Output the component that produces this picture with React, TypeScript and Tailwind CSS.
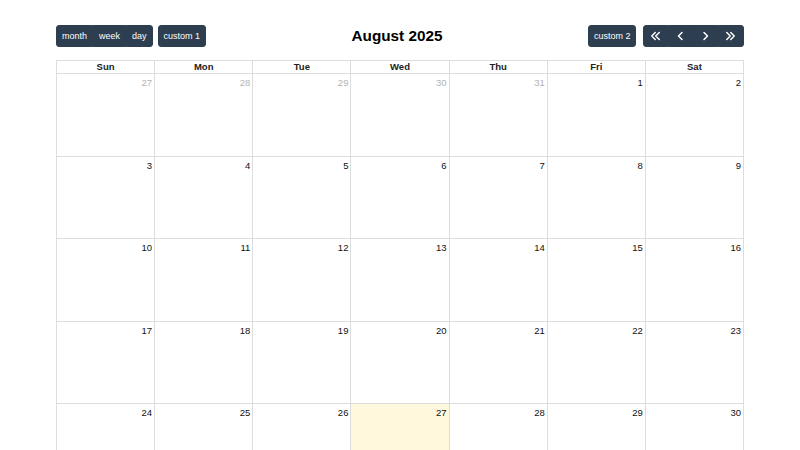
import React from "react";

const Chev = ({ dir, double }: { dir: "l" | "r"; double?: boolean }) => {
  const single = dir === "l" ? "M6 1.5 L2.5 5 L6 8.5" : "M3 1.5 L6.5 5 L3 8.5";
  const dbl =
    dir === "l"
      ? "M5 1.5 L1.5 5 L5 8.5 M9 1.5 L5.5 5 L9 8.5"
      : "M1.5 1.5 L5 5 L1.5 8.5 M5.5 1.5 L9 5 L5.5 8.5";
  return (
    <svg width={double ? 11 : 9} height="10" viewBox={double ? "0 0 10.5 10" : "0 0 9 10"} fill="none" stroke="white" strokeWidth="1.5" strokeLinecap="round" strokeLinejoin="round">
      <path d={double ? dbl : single} />
    </svg>
  );
};

export default function App() {
  const days = ["Sun", "Mon", "Tue", "Wed", "Thu", "Fri", "Sat"];
  const cells: { n: number; other: boolean; today?: boolean }[] = [];
  [27, 28, 29, 30, 31].forEach((n) => cells.push({ n, other: true }));
  for (let i = 1; i <= 31; i++) cells.push({ n: i, other: false, today: i === 27 });
  for (let i = 1; i <= 6; i++) cells.push({ n: i, other: true });

  const btn = "h-[22px] px-[5px] bg-[#2c3e50] border border-[#2c3e50] text-white text-[9px] flex items-center justify-center leading-none";

  return (
    <div className="w-[800px] h-[450px] overflow-hidden bg-white" style={{ fontFamily: '"Liberation Sans", Arial, sans-serif' }}>
      <div className="mx-[56px] pt-[25px] text-[9.5px]">
        <div className="flex items-center justify-between h-[22px] mb-[13px]">
          <div className="flex gap-[5px]">
            <div className="flex">
              <div className={`${btn} rounded-l-[3px] bg-[#1a252f] border-[#1a252f]`}>month</div>
              <div className={`${btn}`}>week</div>
              <div className={`${btn} rounded-r-[3px]`}>day</div>
            </div>
            <div className={`${btn} rounded-[3px]`}>custom 1</div>
          </div>
          <div className="text-[15.3px] font-bold text-black leading-none">August 2025</div>
          <div className="flex gap-[6.5px]">
            <div className={`${btn} rounded-[3px]`}>custom 2</div>
            <div className="flex">
              <div className={`${btn} w-[25px] px-0 rounded-l-[3px]`}><Chev dir="l" double /></div>
              <div className={`${btn} w-[25px] px-0`}><Chev dir="l" /></div>
              <div className={`${btn} w-[25px] px-0`}><Chev dir="r" /></div>
              <div className={`${btn} w-[26px] px-0 rounded-r-[3px]`}><Chev dir="r" double /></div>
            </div>
          </div>
        </div>
        <div className="grid grid-cols-7 border-l border-t border-[#ddd]">
          {days.map((d) => (
            <div key={d} className="h-[13px] border-r border-b border-[#ddd] text-center font-bold text-[#222] leading-[12px]">
              {d}
            </div>
          ))}
          {cells.map((c, i) => (
            <div
              key={i}
              className={`h-[82.5px] border-r border-b border-[#ddd] text-right pr-[2px] pt-[2px] leading-[13px] ${c.today ? "bg-[#fff8dc]" : ""} ${c.other ? "text-[#b3b3b3]" : "text-[#111]"}`}
            >
              {c.n}
            </div>
          ))}
        </div>
      </div>
    </div>
  );
}
